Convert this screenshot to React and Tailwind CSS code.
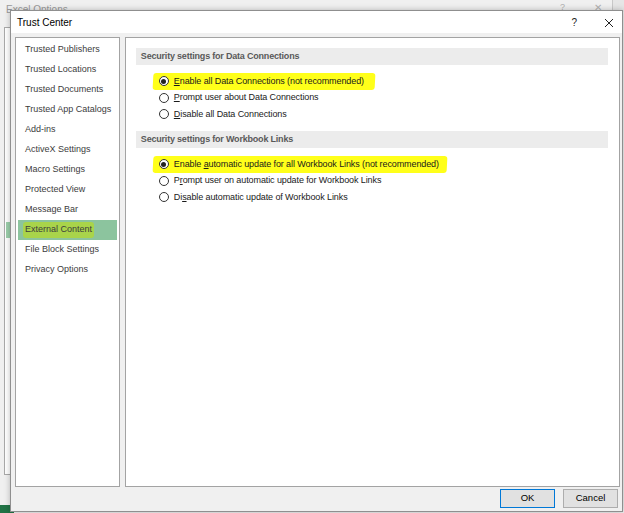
import React from 'react';

const FONT = { fontFamily: '"Liberation Sans", Arial, sans-serif' };

const SIDEBAR = [
  'Trusted Publishers',
  'Trusted Locations',
  'Trusted Documents',
  'Trusted App Catalogs',
  'Add-ins',
  'ActiveX Settings',
  'Macro Settings',
  'Protected View',
  'Message Bar',
  'External Content',
  'File Block Settings',
  'Privacy Options',
];

// label split around the access-key letter
const SECTIONS = [
  {
    title: 'Security settings for Data Connections',
    options: [
      { pre: '', key: 'E', post: 'nable all Data Connections (not recommended)', checked: true, mark: 'w-[222px]' },
      { pre: '', key: 'P', post: 'rompt user about Data Connections' },
      { pre: '', key: 'D', post: 'isable all Data Connections' },
    ],
  },
  {
    title: 'Security settings for Workbook Links',
    options: [
      { pre: 'Enable ', key: 'a', post: 'utomatic update for all Workbook Links (not recommended)', checked: true, mark: 'w-[294px]' },
      { pre: 'P', key: 'r', post: 'ompt user on automatic update for Workbook Links' },
      { pre: 'Di', key: 's', post: 'able automatic update of Workbook Links' },
    ],
  },
];

function Radio({ checked }) {
  return (
    <span className="relative w-[10px] h-[10px] rounded-full border border-[#333333] bg-white flex items-center justify-center shrink-0">
      {checked && <span className="w-[5px] h-[5px] rounded-full bg-[#222222]" />}
    </span>
  );
}

function Option({ opt }) {
  return (
    <div className="relative h-[16.5px] flex items-center pl-[23px] gap-[5px]">
      {opt.mark && (
        <div className={`absolute left-[17px] top-[0px] h-[17px] ${opt.mark} bg-[#ffff1a] rounded-[3px] -skew-x-3`} />
      )}
      <Radio checked={opt.checked} />
      <span className="relative text-[9px] tracking-[-0.1px] text-[#1a1a1a] whitespace-nowrap">
        {opt.pre}
        <span className="underline underline-offset-1">{opt.key}</span>
        {opt.post}
      </span>
    </div>
  );
}

export default function App() {
  return (
    <div className="relative w-[624px] h-[513px] overflow-hidden bg-[#f0f0f0]" style={FONT}>
      {/* Excel Options window behind */}
      <div className="absolute left-[6px] top-[2px] text-[10px] text-[#9a9a9a]">Excel Options</div>
      <div className="absolute left-[560px] top-[1px] text-[9px] text-[#b0b0b0]">?</div>
      <div className="absolute left-[594px] top-[0px] text-[10px] text-[#b0b0b0]">✕</div>
      <div className="absolute left-[612px] top-0 w-[12px] h-[12px] border-l border-[#c8c8c8] bg-[#e6e6e6]" />
      <div className="absolute left-[4px] top-[27px] w-[20px] h-[448px] border-l border-t border-b border-[#a9a9a9] bg-white" />
      <div className="absolute left-[6px] top-[222px] w-[8px] h-[16px] bg-[#9ccfab]" />
      <div className="absolute left-0 top-[505px] w-[14px] h-[8px] bg-[#217346]" />

      {/* Trust Center dialog */}
      <div className="absolute left-[10px] top-[10px] w-[613px] h-[502px] border border-[#8f8f8f] bg-[#f0f0f0] flex flex-col shadow-[0_0_6px_rgba(0,0,0,0.25)]">
        {/* title bar */}
        <div className="h-[22px] bg-white flex items-center pl-[6px] pr-[8px] shrink-0">
          <span className="text-[10px] text-black flex-1">Trust Center</span>
          <span className="text-[10px] text-[#222] mr-[27px]">?</span>
          <svg width="10" height="10" viewBox="0 0 10 10" className="mt-[1px]">
            <path d="M1 1 L9 9 M9 1 L1 9" stroke="#222" strokeWidth="1" />
          </svg>
        </div>

        {/* body */}
        <div className="flex-1 flex gap-[5px] pl-[4px] pr-[2px] pt-[4px]">
          {/* category list */}
          <div className="w-[105px] h-[450px] bg-white border border-[#a3a3a3] pt-[2px]">
            {SIDEBAR.map((item) => {
              const active = item === 'External Content';
              return (
                <div
                  key={item}
                  className={`h-[20px] mx-[2px] flex items-center pl-[7px] text-[9px] text-[#3c3c3c] whitespace-nowrap ${
                    active ? 'bg-[#8cc49e]' : ''
                  }`}
                >
                  {active ? (
                    <span className="bg-[#a9d44a] rounded-[3px] -ml-[2px] px-[2px] py-[1px]">{item}</span>
                  ) : (
                    item
                  )}
                </div>
              );
            })}
          </div>

          {/* settings panel */}
          <div className="w-[496px] h-[450px] bg-white border border-[#a3a3a3] pt-[10px] pl-[10px] pr-[11px]">
            {SECTIONS.map((sec, i) => (
              <div key={sec.title} className={i > 0 ? 'mt-[8.5px]' : ''}>
                <div className="h-[17px] bg-[#ececec] flex items-center pl-[5px] text-[9px] tracking-[-0.2px] font-bold text-[#595959]">
                  {sec.title}
                </div>
                <div className="mt-[8px]">
                  {sec.options.map((opt) => (
                    <Option key={opt.post} opt={opt} />
                  ))}
                </div>
              </div>
            ))}
          </div>
        </div>

        {/* buttons */}
        <div className="h-[25px] flex items-start justify-end gap-[8px] pr-[4px] pt-[2px] shrink-0 relative">
          <button className="w-[55px] h-[19px] bg-[#e1e1e1] border border-[#0078d7] text-[9.5px] text-black">OK</button>
          <button className="w-[55px] h-[19px] bg-[#e1e1e1] border border-[#adadad] text-[9.5px] text-black">Cancel</button>
          <div className="absolute right-[1px] bottom-[1px] w-[4px] h-[4px] bg-[radial-gradient(circle,#9a9a9a_35%,transparent_40%)] bg-[length:2px_2px]" />
        </div>
      </div>
    </div>
  );
}
